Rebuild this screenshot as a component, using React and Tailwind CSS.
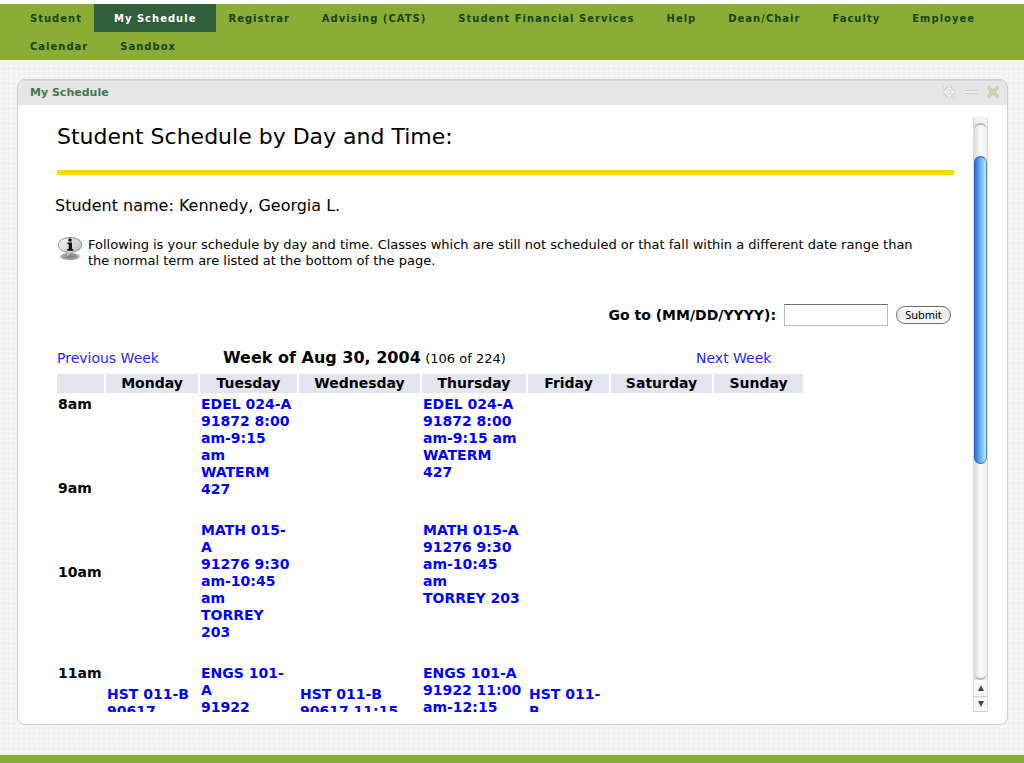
import { clsx } from 'clsx';

const tabs = [
  'Student',
  'My Schedule',
  'Registrar',
  'Advising (CATS)',
  'Student Financial Services',
  'Help',
  'Dean/Chair',
  'Faculty',
  'Employee',
  'Calendar',
  'Sandbox',
];

const days = ['Monday', 'Tuesday', 'Wednesday', 'Thursday', 'Friday', 'Saturday', 'Sunday'];

// one row per quarter hour, starting at 8am
const slots = Array.from({ length: 16 }, (_, i) => i);

const courses = [
  { day: 1, start: 0, span: 6, lines: ['EDEL 024-A', '91872 8:00', 'am-9:15', 'am', 'WATERM', '427'] },
  { day: 3, start: 0, span: 6, lines: ['EDEL 024-A', '91872 8:00', 'am-9:15 am', 'WATERM', '427'] },
  { day: 1, start: 6, span: 6, lines: ['MATH 015-', 'A', '91276 9:30', 'am-10:45', 'am', 'TORREY', '203'] },
  { day: 3, start: 6, span: 6, lines: ['MATH 015-A', '91276 9:30', 'am-10:45', 'am', 'TORREY 203'] },
  { day: 1, start: 12, span: 4, lines: ['ENGS 101-', 'A', '91922'] },
  { day: 3, start: 12, span: 4, lines: ['ENGS 101-A', '91922 11:00', 'am-12:15'] },
  { day: 0, start: 13, span: 3, lines: ['HST 011-B', '90617'] },
  { day: 2, start: 13, span: 3, lines: ['HST 011-B', '90617 11:15'] },
  { day: 4, start: 13, span: 3, lines: ['HST 011-', 'B'] },
];

function NavBar() {
  return (
    <nav className="mt-1 bg-[#8aae35] px-5">
      <ul className="flex flex-wrap gap-x-3">
        {tabs.map((tab) => (
          <li key={tab} className="flex">
            <a
              href="#"
              className={clsx(
                'flex h-7 items-center text-[10px] font-bold tracking-widest',
                tab === 'My Schedule' ? '-mx-2.5 bg-[#305f3a] px-5 text-white' : 'px-2.5 text-[#17431a]'
              )}
            >
              {tab}
            </a>
          </li>
        ))}
      </ul>
    </nav>
  );
}

function PanelHeader() {
  return (
    <header className="flex h-[25px] shrink-0 items-center justify-between rounded-t-lg border-t border-[#d6d6d6] bg-[#e6e6e6] pl-3 pr-[7px]">
      <h2 className="text-[11px] font-bold text-[#42764f]">My Schedule</h2>
      <div className="flex gap-2 pb-0.5">
        <button type="button" aria-label="Maximize">
          <svg className="h-3.5 w-3.5" viewBox="0 0 14 14" fill="none">
            <rect x="1" y="1" width="12" height="12" stroke="#d2d2d2" strokeDasharray="1 1" />
            <path d="M5 3.500L3.500 5v4L5 10.500h4L10.500 9V5L9 3.500z" stroke="#f5f5f5" />
            <path
              d="M5.500 2L2 5.500M8.500 2L12 5.500M2 8.500L5.500 12M12 8.500L8.500 12"
              stroke="#bdbdbd"
            />
          </svg>
        </button>
        <button type="button" aria-label="Minimize">
          <svg className="h-3.5 w-3.5" viewBox="0 0 14 14">
            <rect x="1" y="5" width="12" height="4" fill="#c9c9c9" />
            <rect x="1" y="6" width="12" height="2" fill="#f0f0f0" />
          </svg>
        </button>
        <button type="button" aria-label="Close">
          <svg className="h-3.5 w-3.5" viewBox="0 0 14 14" fill="none" strokeLinecap="round">
            <path d="M3 3l8 8M11 3l-8 8" stroke="#c5cca6" strokeWidth="3.600" />
            <path d="M3 3l8 8M11 3l-8 8" stroke="#d1d8ae" strokeWidth="2" />
          </svg>
        </button>
      </div>
    </header>
  );
}

function InfoIcon() {
  return (
    <svg className="h-[26px] w-[26px] shrink-0" viewBox="0 0 26 26">
      <defs>
        <linearGradient id="bubble" x1="0" y1="0" x2="1" y2="1">
          <stop offset="0" stopColor="#fafafa" />
          <stop offset="1" stopColor="#b4b4b4" />
        </linearGradient>
        <radialGradient id="shadow">
          <stop offset="0" stopColor="#777" />
          <stop offset="0.7" stopColor="#a5a5a5" />
          <stop offset="1" stopColor="#fff" stopOpacity="0" />
        </radialGradient>
      </defs>
      <ellipse cx="13" cy="19.500" rx="12" ry="4.500" fill="url(#shadow)" />
      <path
        d="M13 .5C6.500.5 1.500 3.500 1.500 7.800c0 4 3.500 6.800 8.500 7.200L9.500 20.500l6-5.500c5.500-.5 9-3.200 9-7.200C24.500 3.500 19.500.5 13 .5z"
        fill="url(#bubble)"
        stroke="#8e8e8e"
      />
      <circle cx="13" cy="3" r="1.800" fill="#111" />
      <path d="M10.500 5.500h4.500v6.500h1.200v1.800h-6v-1.800h1.500V7.200h-1.200z" fill="#111" />
    </svg>
  );
}

function ScheduleTable() {
  return (
    <table className="w-[750px] table-fixed border-separate border-spacing-0.5 text-[14px] leading-[17px] font-bold">
      <colgroup>
        <col className="w-[47px]" />
        <col className="w-[92px]" />
        <col className="w-[97px]" />
        <col className="w-[121px]" />
        <col className="w-[104px]" />
        <col className="w-[81px]" />
        <col className="w-[101px]" />
        <col className="w-[89px]" />
      </colgroup>
      <thead>
        <tr>
          <td className="bg-[#e2e5ef] p-px"></td>
          {days.map((day) => (
            <th key={day} scope="col" className="bg-[#e2e5ef] p-px text-center">
              {day}
            </th>
          ))}
        </tr>
      </thead>
      <tbody>
        {slots.map((slot) => (
          <tr key={slot} className={slot === 11 ? 'h-[36px]' : 'h-[19px]'}>
            {slot % 4 === 0 ? (
              <th scope="row" className="p-px text-left align-top">
                {8 + slot / 4}am
              </th>
            ) : (
              <td className="p-px"></td>
            )}
            {days.map((day, d) => {
              const course = courses.find((c) => c.day === d && slot >= c.start && slot < c.start + c.span);
              if (!course) return <td key={day} className="p-px"></td>;
              if (course.start !== slot) return null;
              return (
                <td key={day} rowSpan={course.span} className="p-px align-top whitespace-nowrap">
                  <a href="#" className="text-[#0000ff]">
                    {course.lines.map((line) => (
                      <span key={line} className="block">
                        {line}
                      </span>
                    ))}
                  </a>
                </td>
              );
            })}
          </tr>
        ))}
      </tbody>
    </table>
  );
}

function Scrollbar() {
  return (
    <div className="flex w-[15px] shrink-0 flex-col border-x border-[#dcdcdc] bg-linear-to-r from-[#d9d9d9] via-[#fbfbfb] to-[#ededed]">
      <div className="h-1.5 bg-[#f2f2f2]"></div>
      <div className="flex min-h-0 flex-1 flex-col rounded-full border-y-2 border-[#b5b5b5]">
        <div className="h-[31px]"></div>
        <div className="h-[308px] rounded-full border border-[#2c5fb5] border-r-[#6b7f92] bg-linear-to-r from-[#2d6fd2] via-[#6db4f5] to-[#b4ecff]"></div>
      </div>
      <button type="button" aria-label="Scroll up" className="flex h-4 items-center justify-center bg-[#f7f7f7]">
        <svg className="h-2 w-2" viewBox="0 0 8 8" fill="#444">
          <path d="M4 1l3 6H1z" />
        </svg>
      </button>
      <button
        type="button"
        aria-label="Scroll down"
        className="flex h-4 items-center justify-center border-y border-[#cfcfcf] bg-[#f7f7f7]"
      >
        <svg className="h-2 w-2" viewBox="0 0 8 8" fill="#444">
          <path d="M4 7l3-6H1z" />
        </svg>
      </button>
    </div>
  );
}

export default function App() {
  return (
    <div className="flex h-screen flex-col bg-white font-['Verdana','DejaVu_Sans',sans-serif] text-black">
      <NavBar />
      <main className="flex min-h-0 flex-1 flex-col bg-[#f2f3f1] bg-[repeating-linear-gradient(90deg,#0000_0_3px,#00000003_3px_5px),repeating-linear-gradient(0deg,#0000_0_3px,#ffffff40_3px_5px)] px-4 pt-[19px] pb-[30px]">
        <section className="ml-px flex min-h-0 flex-1 flex-col rounded-lg border border-[#cccccc] bg-white">
          <PanelHeader />
          <div className="flex min-h-0 flex-1 justify-between gap-[19px] pt-3 pr-[19px] pb-3 pl-[37px]">
            <div className="min-w-0 flex-1 overflow-hidden">
              <h1 className="ml-0.5 border-b-5 border-[#ffd700] pt-1.5 pb-[19px] text-[22px] leading-7">
                Student Schedule by Day and Time:
              </h1>
              <p className="mt-[21px] text-[16px] leading-5">Student name: Kennedy, Georgia L.</p>
              <div className="mt-[21px] ml-0.5 flex gap-[5px] pr-4">
                <InfoIcon />
                <p className="text-[13px] leading-4">
                  Following is your schedule by day and time. Classes which are still not scheduled or that fall within
                  a different date range than the normal term are listed at the bottom of the page.
                </p>
              </div>
              <form className="mt-[35px] flex items-center justify-end gap-2 pr-[3px]" onSubmit={(e) => e.preventDefault()}>
                <label htmlFor="goto" className="text-[14px] font-bold">
                  Go to (MM/DD/YYYY):
                </label>
                <input
                  id="goto"
                  type="text"
                  className="h-[22px] w-26 border border-[#b8b8b8] border-t-[#6e6e6e] bg-white px-1 text-[12px]"
                />
                <button
                  type="submit"
                  className="h-[18px] w-[55px] rounded-full border border-[#6b6b6b] bg-linear-to-b from-white via-[#e8e8e8] to-white font-['Noto_Sans',sans-serif] text-[11px] leading-4"
                >
                  Submit
                </button>
              </form>
              <div className="mt-[19px] ml-0.5 grid grid-cols-[166px_473px_auto] items-start text-[14px] leading-[26px]">
                <a href="#" className="text-[#2a1fff]">
                  Previous Week
                </a>
                <p>
                  <strong className="text-[16px]">Week of Aug 30, 2004</strong>{' '}
                  <span className="text-[13px]">(106 of 224)</span>
                </p>
                <a href="#" className="text-[#2a1fff]">
                  Next Week
                </a>
              </div>
              <ScheduleTable />
            </div>
            <Scrollbar />
          </div>
        </section>
      </main>
      <footer className="h-2 shrink-0 bg-[#8aae35]"></footer>
    </div>
  );
}
